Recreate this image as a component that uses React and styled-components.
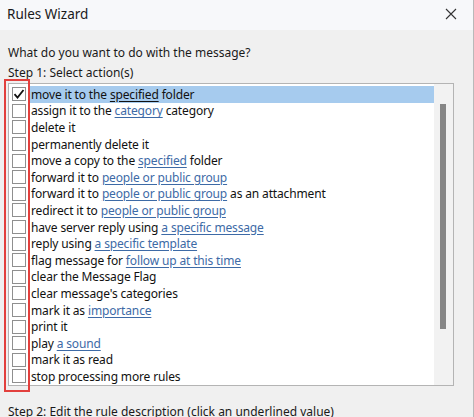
import React from 'react'
import styled, { createGlobalStyle } from "styled-components";

const GlobalStyle = createGlobalStyle`
  html, body {
    margin: 0;
    padding: 0;
    background: #f0f0f0;
  }
  body {
    font-family: "Noto Sans", "Open Sans", sans-serif;
  }
`;

const Window = styled.div`
  position: relative;
  width: 474px;
  height: 417px;
  overflow: hidden;
  background: #f0f0f0;
  border-right: 1px solid #b9b9b9;
  box-sizing: border-box;
`;

const TitleBar = styled.div`
  height: 30px;
  display: flex;
  align-items: center;
  justify-content: space-between;
  padding: 0 16px 2px 7px;
  background: #f7f8fa;
  box-sizing: border-box;
`;

const Title = styled.span`
  font-size: 13.5px;
  color: #1a1a1a;
`;

const CloseButton = styled.span`
  display: flex;
  width: 12px;
  height: 12px;
`;

const Body = styled.div`
  padding: 13px 0 0 8px;
`;

const Label = styled.div`
  height: 20px;
  line-height: 20px;
  font-size: 12px;
  color: #1a1a1a;
  white-space: nowrap;
`;

const ListBox = styled.div`
  width: 446px;
  height: 303px;
  display: flex;
  background: #fff;
  border: 1px solid #b4b4b4;
  box-sizing: border-box;
`;

const Rows = styled.div`
  flex: 1;
  padding: 2px 0 0 3px;
`;

const Row = styled.div`
  height: 16.6px;
  display: flex;
  align-items: center;
  gap: 4px;
`;

const Box = styled.span`
  flex: none;
  width: 14px;
  height: 14px;
  border: 1px solid #8f8f8f;
  background: #fff;
  box-sizing: border-box;
  display: flex;
  align-items: center;
  justify-content: center;
`;

const Text = styled.span`
  flex: 1;
  height: 100%;
  padding-left: 1px;
  display: flex;
  align-items: center;
  font-size: 12px;
  letter-spacing: -0.15px;
  color: #111;
  white-space: pre;
  background: ${(p) => (p.$selected ? "#a6cbee" : "transparent")};
`;

const Link = styled.span`
  color: ${(p) => (p.$selected ? "#111" : "#3d6aa6")};
  text-decoration: underline;
  text-underline-offset: 2px;
`;

const ScrollTrack = styled.div`
  width: 19px;
  background: #f2f2f2;
  padding: 20px 2px 0 0;
  display: flex;
  justify-content: center;
  box-sizing: border-box;
`;

const Thumb = styled.div`
  width: 6px;
  height: 225px;
  background: #868686;
`;

const StepTwo = styled(Label)`
  margin-top: 16px;
`;

const Annotation = styled.div`
  position: absolute;
  left: 4px;
  top: 79px;
  width: 26px;
  height: 313px;
  border: 2px solid #e2403d;
  box-sizing: border-box;
  pointer-events: none;
`;

const actions = [
  { pre: "move it to the ", link: "specified", post: " folder", checked: true },
  { pre: "assign it to the ", link: "category", post: " category" },
  { pre: "delete it" },
  { pre: "permanently delete it" },
  { pre: "move a copy to the ", link: "specified", post: " folder" },
  { pre: "forward it to ", link: "people or public group" },
  { pre: "forward it to ", link: "people or public group", post: " as an attachment" },
  { pre: "redirect it to ", link: "people or public group" },
  { pre: "have server reply using ", link: "a specific message" },
  { pre: "reply using ", link: "a specific template" },
  { pre: "flag message for ", link: "follow up at this time" },
  { pre: "clear the Message Flag" },
  { pre: "clear message's categories" },
  { pre: "mark it as ", link: "importance" },
  { pre: "print it" },
  { pre: "play ", link: "a sound" },
  { pre: "mark it as read" },
  { pre: "stop processing more rules" },
];

function Check() {
  return (
    <svg width="12" height="12" viewBox="0 0 12 12">
      <path d="M1.5 6.2 L4.5 9.5 L10.5 2" fill="none" stroke="#111" strokeWidth="1.8" />
    </svg>
  );
}

function App() {
  return (
    <Window>
      <GlobalStyle />
      <TitleBar>
        <Title>Rules Wizard</Title>
        <CloseButton>
          <svg width="12" height="12" viewBox="0 0 12 12">
            <path d="M1 1 L11 11 M11 1 L1 11" stroke="#333" strokeWidth="1.1" />
          </svg>
        </CloseButton>
      </TitleBar>
      <Body>
        <Label>What do you want to do with the message?</Label>
        <Label>Step 1: Select action(s)</Label>
        <ListBox>
          <Rows>
            {actions.map((a, i) => (
              <Row key={i}>
                <Box>{a.checked && <Check />}</Box>
                <Text $selected={a.checked}>
                  {a.pre}
                  {a.link && <Link $selected={a.checked}>{a.link}</Link>}
                  {a.post}
                </Text>
              </Row>
            ))}
          </Rows>
          <ScrollTrack>
            <Thumb />
          </ScrollTrack>
        </ListBox>
        <StepTwo>Step 2: Edit the rule description (click an underlined value)</StepTwo>
      </Body>
      <Annotation />
    </Window>
  )
}

export default App
